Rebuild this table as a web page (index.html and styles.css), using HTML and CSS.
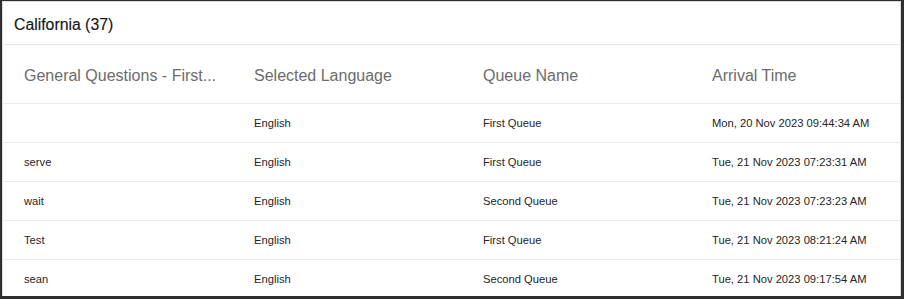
FILE: index.html
```html
<!DOCTYPE html>
<html>
<head>
<meta charset="utf-8">
<link rel="stylesheet" href="styles.css">
</head>
<body>
<div class="frame">
  <div class="card">
    <div class="title">California (37)</div>
    <div class="table">
      <div class="row head">
        <div class="cell">General Questions - First...</div>
        <div class="cell">Selected Language</div>
        <div class="cell">Queue Name</div>
        <div class="cell">Arrival Time</div>
      </div>
      <div class="row">
        <div class="cell"></div>
        <div class="cell">English</div>
        <div class="cell">First Queue</div>
        <div class="cell">Mon, 20 Nov 2023 09:44:34 AM</div>
      </div>
      <div class="row">
        <div class="cell">serve</div>
        <div class="cell">English</div>
        <div class="cell">First Queue</div>
        <div class="cell">Tue, 21 Nov 2023 07:23:31 AM</div>
      </div>
      <div class="row">
        <div class="cell">wait</div>
        <div class="cell">English</div>
        <div class="cell">Second Queue</div>
        <div class="cell">Tue, 21 Nov 2023 07:23:23 AM</div>
      </div>
      <div class="row">
        <div class="cell">Test</div>
        <div class="cell">English</div>
        <div class="cell">First Queue</div>
        <div class="cell">Tue, 21 Nov 2023 08:21:24 AM</div>
      </div>
      <div class="row">
        <div class="cell">sean</div>
        <div class="cell">English</div>
        <div class="cell">Second Queue</div>
        <div class="cell">Tue, 21 Nov 2023 09:17:54 AM</div>
      </div>
    </div>
  </div>
</div>
</body>
</html>
```

FILE: styles.css
```css
* { box-sizing: border-box; }
html, body {
  margin: 0;
  padding: 0;
  background: #ffffff;
}
body {
  font-family: "Liberation Sans", Arial, sans-serif;
  width: 904px;
  height: 299px;
  overflow: hidden;
}
.frame {
  width: 904px;
  height: 299px;
  border-style: solid;
  border-color: #2e2e2e;
  border-width: 1px 3px 3px 2px;
  overflow: hidden;
  background: #ffffff;
}
.card {
  height: 100%;
  border: 1px solid #dcdcdc;
  border-bottom: none;
  overflow: hidden;
}
.title {
  height: 43px;
  padding-left: 11px;
  padding-top: 3px;
  display: flex;
  align-items: center;
  font-size: 15.8px;
  color: #151515;
  border-bottom: 1px solid #e8e8e8;
  -webkit-text-stroke: 0.15px #151515;
}
.row {
  display: grid;
  grid-template-columns: 230px 229px 229px 1fr;
  height: 39px;
  border-bottom: 1px solid #ebebeb;
  align-items: center;
}
.row.head {
  height: 59px;
  padding-top: 3px;
}
.cell {
  padding-left: 21px;
  font-size: 11.2px;
  color: #262626;
  white-space: nowrap;
  overflow: hidden;
}
.head .cell {
  font-size: 16px;
  color: #6c6c6c;
}
```
